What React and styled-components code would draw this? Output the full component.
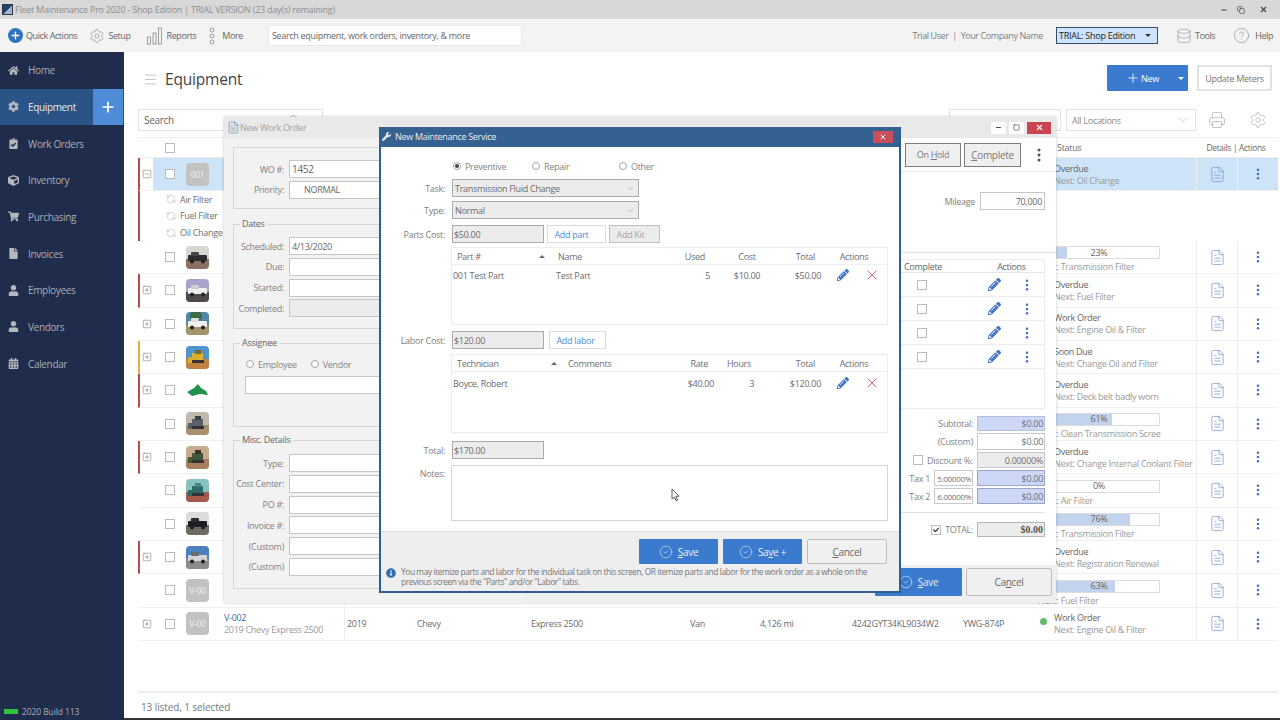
import React from "react";
import styled, { createGlobalStyle } from "styled-components";
import {
  Settings, Printer, Database, CircleHelp, RefreshCcw, X, Plus, ChevronDown, FileText,
  CircleCheck, Menu, SquarePlus, SquareMinus, Minus, Square, Copy, Search,
} from "lucide-react";
import {
  FaHome, FaCog, FaCube, FaShoppingCart, FaUser, FaCalendarAlt, FaFile, FaClipboardCheck,
  FaPencilAlt, FaInfoCircle, FaWrench, FaCheck,
} from "react-icons/fa";

const GlobalStyle = createGlobalStyle`
  html, body { margin: 0; padding: 0; background: #fff; }
  body {
    width: 1280px;
    height: 720px;
    overflow: hidden;
    font-family: "Open Sans", "Liberation Sans", sans-serif;
    font-size: 9px;
    letter-spacing: -0.3px;
    color: #6b6b6b;
  }
  * { box-sizing: border-box; }
`;

const Page = styled.div`
  position: relative;
  width: 1280px;
  height: 720px;
  display: flex;
  flex-direction: column;
  overflow: hidden;
`;

/* ---------- top bars ---------- */

const TitleBar = styled.div`
  height: 19px;
  flex: none;
  display: flex;
  align-items: center;
  padding: 0 12px 0 2px;
  background: #d8d8d8;
  color: #8f8f8f;
  font-size: 9px;
  letter-spacing: -0.25px;
`;

const AppLogo = styled.div`
  width: 11px;
  height: 11px;
  margin-right: 2px;
  background: linear-gradient(135deg, #24406e 50%, #9fb6d6 50%);
  border: 1px solid #334;
`;

const WinControls = styled.div`
  margin-left: auto;
  display: grid;
  grid-template-columns: 17px 22px 9px;
  align-items: center;
  color: #444;
`;

const Toolbar = styled.div`
  height: 33px;
  flex: none;
  display: flex;
  align-items: center;
  padding: 0 7px 0 8px;
  background: #f3f3f3;
  color: #666;
  letter-spacing: -0.42px;
`;

const ToolItem = styled.div`
  display: flex;
  align-items: center;
  gap: ${p => p.$gap || 3}px;
  margin-left: ${p => p.$ml || 0}px;
  white-space: nowrap;
`;

const QuickIcon = styled.div`
  width: 15px;
  height: 15px;
  border-radius: 50%;
  background: #2f74c0;
  color: #fff;
  display: flex;
  align-items: center;
  justify-content: center;
`;

const GlobalSearch = styled.div`
  width: 254px;
  height: 21px;
  margin-left: 25px;
  padding-left: 3px;
  display: flex;
  align-items: center;
  background: #fff;
  border: 1px solid #e8e8e8;
  border-radius: 2px;
  color: #666;
  letter-spacing: -0.3px;
`;

const UserInfo = styled.div`
  margin-left: auto;
  color: #808080;
  white-space: nowrap;
`;

const EditionSelect = styled.div`
  width: 102px;
  height: 17px;
  margin-left: 13px;
  padding: 0 6px 0 2px;
  display: flex;
  align-items: center;
  justify-content: space-between;
  background: #cfe3fb;
  border: 1px solid #33506f;
  color: #222;
  letter-spacing: -0.25px;
`;

const Caret = styled.span`
  width: 0;
  height: 0;
  border-left: 3px solid transparent;
  border-right: 3px solid transparent;
  border-top: 3px solid ${p => p.$color || "#333"};
`;

const UpCaret = styled.span`
  width: 0;
  height: 0;
  border-left: 3px solid transparent;
  border-right: 3px solid transparent;
  border-bottom: 3px solid #666;
`;

/* ---------- sidebar ---------- */

const Body = styled.div`
  flex: 1;
  display: flex;
  min-height: 0;
`;

const Sidebar = styled.nav`
  width: 124px;
  flex: none;
  display: flex;
  flex-direction: column;
  background: #1f2c4b;
  color: #a9adb6;
  font-size: 10px;
  letter-spacing: -0.35px;
`;

const NavItem = styled.div`
  height: 36.67px;
  flex: none;
  display: flex;
  align-items: center;
  padding-left: 8px;
  gap: 9px;
  background: ${p => (p.$active ? "#2a5485" : "transparent")};
  color: ${p => (p.$active ? "#e4e8ee" : "#a9adb6")};
`;

const NavIcon = styled.span`
  width: 11px;
  display: flex;
  justify-content: center;
  color: #b4b7bd;
`;

const NavAdd = styled.div`
  margin-left: auto;
  margin-right: 1px;
  width: 30px;
  height: 100%;
  display: flex;
  align-items: center;
  justify-content: center;
  background: #4e8cd8;
  color: #fff;
`;

const BuildLabel = styled.div`
  margin-top: auto;
  height: 18px;
  display: flex;
  align-items: center;
  gap: 4px;
  padding-left: 4px;
  font-size: 8.5px;
  letter-spacing: -0.1px;
  color: #a9adb6;
`;

const Battery = styled.span`
  width: 14px;
  height: 5px;
  background: #2fc23a;
`;

/* ---------- main content ---------- */

const Main = styled.main`
  flex: 1;
  min-width: 0;
  display: flex;
  flex-direction: column;
  padding: 0 2px 0 14px;
  border-bottom: 2px solid #333;
  background: #fff;
`;

const MainHeader = styled.header`
  height: 57px;
  flex: none;
  display: flex;
  align-items: flex-start;
  padding: 13px 6px 0 5px;
`;

const PageTitle = styled.h1`
  margin: 3px 0 0;
  display: flex;
  align-items: center;
  gap: 7px;
  font-size: 15.5px;
  font-weight: 400;
  letter-spacing: -0.2px;
  color: #444;
`;

const NewButton = styled.div`
  margin-left: auto;
  width: 81px;
  height: 26px;
  display: flex;
  align-items: center;
  justify-content: space-between;
  padding: 0 4px 0 19px;
  background: #3b7bcf;
  color: #fff;
  border-radius: 1px;
`;

const NewLabel = styled.span`
  display: flex;
  align-items: center;
  gap: 1px;
`;

const OutlineButton = styled.div`
  width: 75px;
  height: 26px;
  margin-left: 9px;
  display: flex;
  align-items: center;
  justify-content: center;
  border: 2px solid #e2e2e2;
  border-radius: 1px;
  color: #777;
`;

const FilterBar = styled.div`
  height: 22px;
  flex: none;
  margin-bottom: 6px;
  display: flex;
  align-items: stretch;
`;

const SearchBox = styled.div`
  width: 185px;
  display: flex;
  align-items: center;
  justify-content: space-between;
  padding: 0 22px 0 5px;
  border: 1px solid #e4e4e4;
  color: #666;
  font-size: 10px;
`;

const BlankFilter = styled.div`
  width: 112px;
  margin-left: auto;
  border: 1px solid #e4e4e4;
`;

const LocationFilter = styled.div`
  width: 130px;
  margin-left: 5px;
  padding: 0 5px;
  display: flex;
  align-items: center;
  justify-content: space-between;
  border: 1px solid #e4e4e4;
  color: #888;
`;

const FilterIcon = styled.div`
  width: 41px;
  display: flex;
  align-items: center;
  justify-content: center;
  color: #a8a8a8;
`;

const Table = styled.div`
  flex: 1;
  min-height: 0;
  border-bottom: 2px solid #eeeeee;
  border-top: 1px solid #eeeeee;
`;

const COLUMNS = "13px 33px 38px 121px 70px 114px 159px 70px 92px 111px 77px 159px 41px 39px";

const TableHead = styled.div`
  height: 20px;
  display: grid;
  grid-template-columns: ${COLUMNS};
  align-items: center;
  border-left: 2px solid transparent;
  border-bottom: 1px solid #eeeeee;
  color: #666;
`;

const Row = styled.div`
  height: ${p => (p.$selected ? 33 : 33.33)}px;
  display: grid;
  grid-template-columns: ${COLUMNS};
  align-items: center;
  border-left: 2px solid ${p => p.$stripe || "transparent"};
  border-bottom: 1px solid #f0f0f0;
  background: ${p => (p.$selected ? "#cde3f7" : "#fff")};
`;

const ExpandCell = styled.div`
  height: 100%;
  display: flex;
  align-items: center;
  justify-content: center;
  background: #fff;
  color: #666;
`;

const CheckCell = styled.div`
  height: 100%;
  display: flex;
  align-items: center;
  justify-content: center;
`;

const CheckBox = styled.span`
  width: 10px;
  height: 10px;
  flex: none;
  display: inline-flex;
  align-items: center;
  justify-content: center;
  background: #fff;
  border: 1px solid #b9b9b9;
  color: #333;
`;

const ThumbCell = styled.div`
  display: flex;
  align-items: center;
`;

const ThumbArt = styled.svg`
  filter: blur(0.45px);
`;

const PlaceholderThumb = styled.div`
  width: 23px;
  height: 23px;
  overflow: hidden;
  display: flex;
  align-items: center;
  justify-content: center;
  background: #c2c2c2;
  border-radius: 4px;
  color: #eee;
  font-size: 8.5px;
  white-space: nowrap;
`;

const NameCell = styled.div`
  height: 100%;
  display: flex;
  flex-direction: column;
  justify-content: center;
  padding-top: 1px;
  line-height: 12px;
  border-right: 1px solid #eeeeee;
`;

const LinkText = styled.span`
  color: #3a6ca8;
`;

const SubText = styled.span`
  color: #9a9a9a;
  white-space: nowrap;
`;

const Cell = styled.div`
  padding-left: ${p => p.$pl || 2}px;
  color: #6b6b6b;
  white-space: nowrap;
`;

const StatusCell = styled.div`
  height: 100%;
  display: flex;
  flex-direction: column;
  justify-content: ${p => (p.$bar ? "flex-end" : "center")};
  padding-left: ${p => (p.$bar ? 0 : 16)}px;
  padding-top: 1px;
  line-height: 12px;
  position: relative;
  color: #666;
  border-right: 1px solid #eeeeee;
`;

const StatusDot = styled.span`
  position: absolute;
  left: 2px;
  top: 10px;
  width: 7px;
  height: 7px;
  border-radius: 50%;
  background: #63ba6e;
`;

const ProgressBar = styled.div`
  width: 122px;
  height: 13px;
  margin-bottom: 2px;
  position: relative;
  display: flex;
  align-items: center;
  justify-content: center;
  border: 1px solid #dcdcdc;
  color: #666;
  background: #fff;
`;

const ProgressFill = styled.div`
  position: absolute;
  left: 0;
  top: 0;
  bottom: 0;
  background: #c2d3ee;
`;

const ProgressText = styled.span`
  position: relative;
`;

const IconCell = styled.div`
  height: 100%;
  display: flex;
  align-items: center;
  justify-content: center;
  color: ${p => p.$color || "#7f9ad2"};
  border-right: ${p => (p.$divided ? "1px solid #eeeeee" : "none")};
`;

const HeadRightLabel = styled.div`
  grid-column: 13 / 15;
  text-align: center;
  padding-right: 2px;
  font-size: 8.4px;
  white-space: nowrap;
  color: #666;
`;

const SubRows = styled.div`
  height: 50px;
  border-left: 2px solid #b84a4a;
  padding-left: 26px;
  display: flex;
  flex-direction: column;
`;

const SubRow = styled.div`
  height: 16.67px;
  display: flex;
  align-items: center;
  gap: 4px;
  color: #6f6f6f;
`;

const ListFooter = styled.footer`
  height: 25px;
  flex: none;
  display: flex;
  align-items: center;
  padding: 2px 0 0 3px;
  color: #777;
  font-size: 10px;
  letter-spacing: -0.1px;
`;

/* ---------- work order window ---------- */

const WorkOrderWindow = styled.section`
  position: absolute;
  left: 224px;
  top: 117px;
  width: 832px;
  height: 486px;
  display: flex;
  flex-direction: column;
  background: #f2f2f2;
  box-shadow: 0 0 3px rgba(0, 0, 0, 0.22);
`;

const WindowTitle = styled.div`
  height: 21px;
  flex: none;
  display: flex;
  align-items: center;
  padding: 0 5px 0 3px;
  background: #e9e9e9;
  color: #a2a2a2;
`;

const WinButtons = styled.div`
  margin-left: auto;
  display: flex;
  align-items: center;
  gap: 3px;
`;

const WinButton = styled.div`
  width: ${p => (p.$close ? 24 : 15)}px;
  height: 12px;
  display: flex;
  align-items: center;
  justify-content: center;
  background: ${p => (p.$close ? "#c9444e" : "#fff")};
  color: ${p => (p.$close ? "#fff" : "#333")};
`;

const WindowBody = styled.div`
  flex: 1;
  display: flex;
  min-height: 0;
`;

const FormPanel = styled.div`
  width: 300px;
  flex: none;
  padding: 9px 9px 0;
  display: flex;
  flex-direction: column;
`;

const Group = styled.fieldset`
  margin: ${p => p.$mt || 0}px 0 0;
  padding: ${p => p.$pt || 0}px 0 0 0;
  height: ${p => p.$h}px;
  flex: none;
  border: 1px solid #d6d6d6;
  min-width: 0;
`;

const GroupLegend = styled.legend`
  margin-left: 6px;
  padding: 0 2px;
  line-height: 12px;
  color: #666;
`;

const FieldRow = styled.div`
  display: grid;
  grid-template-columns: 50px 1fr;
  column-gap: 5px;
  height: 18px;
  margin-bottom: 2.8px;
  align-items: center;
`;

const FieldLabel = styled.label`
  text-align: right;
  white-space: nowrap;
  color: #828282;
`;

const TextBox = styled.div`
  height: 18px;
  display: flex;
  align-items: center;
  background: ${p => (p.$disabled ? "#ececec" : "#fff")};
  border: 1px solid #c6c6c6;
  color: #666;
  font-size: ${p => p.$size || 9}px;
  padding: 0 2px 0 ${p => p.$pl || 2}px;
  white-space: nowrap;
`;

const RadioRow = styled.div`
  height: 16px;
  display: flex;
  align-items: center;
  gap: ${p => p.$gap ?? 14}px;
  padding-left: ${p => p.$pl || 0}px;
`;

const RadioOption = styled.label`
  display: flex;
  align-items: center;
  gap: 4px;
  color: #858585;
  flex: none;
  width: ${p => (p.$w ? `${p.$w}px` : "auto")};
`;

const RadioDot = styled.span`
  width: 8px;
  height: 8px;
  border-radius: 50%;
  border: 1px solid #a5a5a5;
  background: #fff;
  display: inline-flex;
  align-items: center;
  justify-content: center;
  &::after {
    content: "";
    width: 4px;
    height: 4px;
    border-radius: 50%;
    background: ${p => (p.$on ? "#444" : "transparent")};
  }
`;

const AssigneeBox = styled(TextBox)`
  margin: 4px 0 0 11px;
`;

const DetailPanel = styled.div`
  flex: 1;
  min-width: 0;
  display: flex;
  flex-direction: column;
  background: #fff;
`;

const ActionBar = styled.div`
  height: 34px;
  flex: none;
  display: flex;
  align-items: center;
  justify-content: flex-end;
  gap: 3px;
  border-bottom: 1px solid #e6e6e6;
`;

const GreyButton = styled.div`
  width: ${p => p.$w}px;
  height: 24px;
  display: flex;
  align-items: center;
  justify-content: center;
  background: #efefef;
  border: 1px solid #7c7c7c;
  color: #7a7a7a;
  font-size: ${p => p.$size || 9}px;
`;

const KebabSlot = styled.div`
  width: 35px;
  margin-left: -3px;
  display: flex;
  justify-content: center;
  color: #555;
`;

const MileageRow = styled.div`
  margin-top: 20px;
  padding-right: 11px;
  display: flex;
  align-items: center;
  justify-content: flex-end;
  gap: 5px;
  color: #828282;
`;

const MileageBox = styled(TextBox)`
  width: 65px;
  justify-content: flex-end;
`;

const Divider = styled.div`
  margin-top: ${p => p.$mt}px;
  height: 1px;
  flex: none;
  background: #e2e2e2;
`;

const TaskTable = styled.div`
  margin: 6px 11px 0 0;
  height: 150px;
  flex: none;
  border: 1px solid #ececec;
`;

const TaskHead = styled.div`
  height: 13px;
  display: grid;
  grid-template-columns: 1fr 35px 40px 65px;
  align-items: center;
  border-bottom: 1px solid #e6e6e6;
  color: #666;
`;

const TaskHeadLabel = styled.span`
  grid-column: ${p => p.$col};
  text-align: ${p => p.$align || "left"};
  white-space: nowrap;
`;

const TaskRow = styled.div`
  height: 24px;
  display: grid;
  grid-template-columns: 1fr 35px 40px 30px 35px;
  align-items: center;
  justify-items: center;
  border-bottom: 1px solid #ececec;
`;

const PencilIcon = styled(FaPencilAlt)`
  color: #3d72c6;
`;

const KebabIcon = styled.svg`
  color: ${p => p.$color || "#4f6fb8"};
`;

const TotalsStack = styled.div`
  margin-top: 7px;
  padding-right: 11px;
  display: flex;
  flex-direction: column;
  align-items: stretch;
  gap: 2px;
`;

const TotalsRow = styled.div`
  height: ${p => p.$h || 16}px;
  display: flex;
  align-items: center;
  justify-content: flex-end;
  gap: 4px;
  margin-top: ${p => p.$mt || 0}px;
  color: #828282;
`;

const TotalsBox = styled.div`
  width: ${p => p.$w || 68}px;
  height: 100%;
  padding: 0 1px;
  display: flex;
  align-items: center;
  justify-content: flex-end;
  background: ${p => p.$bg || "#fff"};
  border: 1px solid ${p => p.$line || "#c8c8c8"};
  color: #6f6f6f;
  font-size: ${p => p.$size || 9}px;
`;

const GrandTotal = styled.strong`
  font-family: "Liberation Serif", serif;
  font-size: 10px;
  letter-spacing: 0;
  color: #555;
`;

const TaxLabel = styled.span`
  color: #828282;
`;

const TaxRate = styled(TotalsBox)`
  width: 39px;
  font-size: 8px;
`;

const WindowFooter = styled.div`
  margin-top: auto;
  height: 38px;
  flex: none;
  display: flex;
  align-items: center;
  justify-content: flex-end;
  gap: 4px;
  padding: 0 4px 5px 0;
  background: #efefef;
`;

const PrimaryButton = styled.div`
  width: ${p => p.$w}px;
  height: ${p => p.$h || 25}px;
  display: flex;
  align-items: center;
  justify-content: center;
  gap: 5px;
  background: #3b7bcf;
  color: #e8f0fb;
  font-size: 10px;
  border-radius: 1px;
`;

const CancelButton = styled.div`
  width: ${p => p.$w}px;
  height: ${p => p.$h || 25}px;
  display: flex;
  align-items: center;
  justify-content: center;
  background: #f0f0f0;
  border: 1px solid #bdbdbd;
  border-radius: 2px;
  color: #666;
  font-size: 10px;
`;

/* ---------- maintenance dialog ---------- */

const ServiceDialog = styled.section`
  position: absolute;
  left: 379px;
  top: 127px;
  width: 522px;
  height: 466px;
  display: flex;
  flex-direction: column;
  background: #fff;
  border: 2px solid #2f5f91;
  border-top: none;
`;

const DialogTitle = styled.div`
  height: 20px;
  flex: none;
  display: flex;
  align-items: center;
  gap: 4px;
  padding: 0 6px 1px 1px;
  background: #34618f;
  color: #e8edf3;
`;

const DialogClose = styled.div`
  margin-left: auto;
  width: 20px;
  height: 12px;
  display: flex;
  align-items: center;
  justify-content: center;
  background: #c9505a;
  color: #fff;
`;

const DialogRow = styled.div`
  margin-top: ${p => p.$mt || 0}px;
  height: ${p => p.$h || 18}px;
  flex: none;
  display: grid;
  grid-template-columns: 64px 1fr;
  column-gap: ${p => p.$gap ?? 7}px;
  padding-right: 11px;
  align-items: ${p => (p.$top ? "start" : "center")};
`;

const DialogLabel = styled.label`
  text-align: right;
  color: #7e7e7e;
  white-space: nowrap;
  padding-top: ${p => p.$pt || 0}px;
`;

const FieldGroup = styled.div`
  display: flex;
  gap: 3px;
  align-items: stretch;
  height: 100%;
`;

const SelectBox = styled.div`
  width: 187px;
  height: 18px;
  padding: 0 3px 0 2px;
  display: flex;
  align-items: center;
  justify-content: space-between;
  background: #ececec;
  border: 1px solid #ababab;
  color: #6d6d6d;
`;

const ReadonlyBox = styled.div`
  width: 92px;
  padding-left: 1px;
  display: flex;
  align-items: center;
  background: #ececec;
  border: 1px solid #ababab;
  color: #6d6d6d;
`;

const LinkButton = styled.div`
  width: ${p => p.$w}px;
  margin-left: ${p => p.$ml || 0}px;
  padding-right: ${p => p.$pr || 0}px;
  display: flex;
  align-items: center;
  justify-content: center;
  background: #fff;
  border: 1px solid #dcdcdc;
  color: #4a90d9;
`;

const DisabledButton = styled.div`
  width: ${p => p.$w}px;
  padding-right: 8px;
  display: flex;
  align-items: center;
  justify-content: center;
  background: #ececec;
  border: 1px solid #c0c0c0;
  color: #a5a5a5;
`;

const ItemTable = styled.div`
  margin: ${p => p.$mt}px 11px 0 70px;
  height: ${p => p.$h}px;
  flex: none;
  border: 1px solid #ececec;
`;

const ItemHead = styled.div`
  height: 17px;
  display: grid;
  grid-template-columns: ${p => p.$cols};
  align-items: center;
  border-bottom: 1px solid #eeeeee;
  color: #6f6f6f;
`;

const ItemRow = styled.div`
  height: ${p => p.$h || 22}px;
  display: grid;
  grid-template-columns: ${p => p.$cols};
  align-items: center;
  color: #6b6b6b;
`;

const HeadCell = styled.div`
  display: flex;
  align-items: center;
  justify-content: ${p => p.$justify || "flex-start"};
  padding: 0 ${p => p.$pr || 0}px 0 ${p => p.$pl || 0}px;
  white-space: nowrap;
`;

const ItemCell = styled.div`
  text-align: ${p => p.$align || "left"};
  padding: 0 ${p => p.$pr || 0}px 0 ${p => p.$pl || 0}px;
  white-space: nowrap;
`;

const ItemActions = styled.div`
  display: grid;
  grid-template-columns: ${p => p.$cols};
  justify-items: center;
  align-items: center;
`;

const NotesBox = styled.div`
  background: #fff;
  border: 1px solid #d4d4d4;
  height: 100%;
`;

const DialogFooter = styled.div`
  margin-top: auto;
  height: 60px;
  flex: none;
  padding-top: 7px;
  background: #eeeeee;
  border-top: 1px solid #dcdcdc;
`;

const DialogButtons = styled.div`
  display: flex;
  justify-content: flex-end;
  gap: 5px;
  padding-right: 12px;
`;

const InfoLine = styled.div`
  margin-top: 3px;
  display: flex;
  align-items: flex-start;
  gap: 5px;
  padding-left: 5px;
  font-size: 8.4px;
  letter-spacing: -0.42px;
  line-height: 10px;
  color: #777;
`;

const InfoIcon = styled(FaInfoCircle)`
  color: #2f6fb5;
  flex: none;
  margin-top: 1px;
`;

const PointerMark = styled.svg`
  position: absolute;
  left: 671px;
  top: 488px;
`;

const Kebab = ({ size = 12, color }) => (
  <KebabIcon $color={color} width="6" height={size} viewBox="0 0 6 14">
    <circle cx="3" cy="2" r="1.5" fill="currentColor" />
    <circle cx="3" cy="7" r="1.5" fill="currentColor" />
    <circle cx="3" cy="12" r="1.5" fill="currentColor" />
  </KebabIcon>
);

const ReportsIcon = () => (
  <svg width="16" height="18" viewBox="0 0 16 18" fill="none" stroke="#888" strokeWidth="0.8">
    <rect x="0.5" y="10" width="3" height="7" />
    <rect x="6" y="6" width="3" height="11" />
    <rect x="11.5" y="1" width="3" height="16" />
  </svg>
);

const MoreIcon = () => (
  <svg width="6" height="18" viewBox="0 0 6 18" fill="none" stroke="#888" strokeWidth="0.8">
    <circle cx="3" cy="3" r="2" />
    <circle cx="3" cy="9" r="2" />
    <circle cx="3" cy="15" r="2" />
  </svg>
);

// small hand drawn stand-ins for the vehicle photos
const Thumb = ({ sky, ground, body, cab, shape = "truck", tree }) => (
  <ThumbArt width="23" height="23" viewBox="0 0 23 23">
    <defs>
      <clipPath id="thumb-clip"><rect width="23" height="23" rx="4" /></clipPath>
    </defs>
    <g clipPath="url(#thumb-clip)">
      <rect width="23" height="23" fill={sky} />
      {tree && <circle cx="10" cy="4" r="6" fill={tree} />}
      <rect y="13" width="23" height="10" fill={ground} />
      {shape === "truck" && (
        <>
          <rect x="2" y="9" width="19" height="6" rx="1" fill={body} />
          <rect x="5" y="6" width="8" height="4" rx="1" fill={cab} />
          <circle cx="6" cy="15.5" r="2" fill="#222" />
          <circle cx="17" cy="15.5" r="2" fill="#222" />
        </>
      )}
      {shape === "dozer" && (
        <>
          <rect x="6" y="7" width="11" height="7" fill={body} />
          <rect x="9" y="4" width="6" height="4" fill={cab} />
          <rect x="2" y="11" width="4" height="6" fill={body} />
          <rect x="6" y="14" width="12" height="3" fill="#333" />
        </>
      )}
      {shape === "mower" && (
        <path d="M1 13 L8 9 L12 5 L15 9 L20 12 L22 16 L14 15 L6 17 Z" fill={body} />
      )}
    </g>
  </ThumbArt>
);

const VEHICLE_ROWS = [
  { thumb: { sky: "#d9d6d2", ground: "#8b6f60", body: "#2c2c30", cab: "#45454b" }, status: { label: "23%", pct: 23, next: "Transmission Filter" } },
  { stripe: "#b84a4a", expand: true, thumb: { sky: "#a9a3cc", ground: "#4f4a48", body: "#eeeeee", cab: "#cfcfcf" }, status: { title: "Overdue", next: "Fuel Filter" } },
  { expand: true, thumb: { sky: "#4f86a8", ground: "#a39468", body: "#f2f2f2", cab: "#dddddd", tree: "#3d6b45" }, status: { title: "Work Order", next: "Engine Oil & Filter" } },
  { stripe: "#e0b040", expand: true, thumb: { sky: "#4f94cc", ground: "#c0803f", body: "#d8b030", cab: "#7d6a2a", shape: "dozer" }, status: { title: "Soon Due", next: "Change Oil and Filter" } },
  { stripe: "#b84a4a", expand: true, thumb: { sky: "#ffffff", ground: "#ffffff", body: "#22914a", cab: "#22914a", shape: "mower" }, status: { title: "Overdue", next: "Deck belt badly worn" } },
  { thumb: { sky: "#c2b9ad", ground: "#a58f6d", body: "#5a5f69", cab: "#3d4048", shape: "dozer" }, status: { label: "61%", pct: 61, next: "Clean Transmission Scree" } },
  { stripe: "#b84a4a", expand: true, thumb: { sky: "#c9ac8e", ground: "#a77f60", body: "#45563a", cab: "#2c3528", shape: "dozer" }, status: { title: "Overdue", next: "Change Internal Coolant Filter" } },
  { thumb: { sky: "#8ac0c0", ground: "#a4594c", body: "#2f6b66", cab: "#3f8a80", shape: "dozer" }, status: { label: "0%", pct: 0, next: "Air Filter" } },
  { thumb: { sky: "#dcdcdc", ground: "#6f6a62", body: "#1c1c22", cab: "#2b2b33" }, status: { label: "76%", pct: 76, next: "Transmission Filter" } },
  { stripe: "#b84a4a", expand: true, thumb: { sky: "#4a80bc", ground: "#8c8c8c", body: "#d5d5d5", cab: "#6c6c6c" }, status: { title: "Overdue", next: "Registration Renewal" } },
  { placeholder: true, status: { label: "63%", pct: 63, next: "Fuel Filter" } },
  {
    placeholder: true,
    expand: true,
    name: "V-002",
    desc: "2019 Chevy Express 2500",
    cells: ["2019", "Chevy", "Express 2500", "Van", "4,126 mi", "4242GYT34KL9034W2", "YWG-874P"],
    status: { title: "Work Order", next: "Engine Oil & Filter", dot: true },
  },
];

const StatusInfo = ({ status }) => {
  if (status.label) {
    return (
      <StatusCell $bar>
        <ProgressBar>
          <ProgressFill style={{ width: `${status.pct}%` }} />
          <ProgressText>{status.label}</ProgressText>
        </ProgressBar>
        <SubText>Next: {status.next}</SubText>
      </StatusCell>
    );
  }
  return (
    <StatusCell>
      {status.dot && <StatusDot />}
      <span>{status.title}</span>
      <SubText>Next: {status.next}</SubText>
    </StatusCell>
  );
};

const VehicleRow = ({ row }) => (
  <Row $stripe={row.stripe}>
    <ExpandCell>{row.expand && <SquarePlus size={10} strokeWidth={1.2} />}</ExpandCell>
    <CheckCell><CheckBox /></CheckCell>
    <ThumbCell>
      {row.placeholder ? <PlaceholderThumb>V-00</PlaceholderThumb> : <Thumb {...row.thumb} />}
    </ThumbCell>
    <NameCell>
      {row.name && <LinkText>{row.name}</LinkText>}
      {row.desc && <SubText>{row.desc}</SubText>}
    </NameCell>
    {(row.cells || ["", "", "", "", "", "", ""]).map((c, i) => <Cell key={i}>{c}</Cell>)}
    <StatusInfo status={row.status} />
    <IconCell $divided><FileText size={17} strokeWidth={1.1} /></IconCell>
    <IconCell $color="#4f6fb8"><Kebab /></IconCell>
  </Row>
);

const NAV_ITEMS = [
  { label: "Home", icon: <FaHome size={11} /> },
  { label: "Equipment", icon: <FaCog size={11} />, active: true },
  { label: "Work Orders", icon: <FaClipboardCheck size={11} /> },
  { label: "Inventory", icon: <FaCube size={11} /> },
  { label: "Purchasing", icon: <FaShoppingCart size={11} /> },
  { label: "Invoices", icon: <FaFile size={11} /> },
  { label: "Employees", icon: <FaUser size={11} /> },
  { label: "Vendors", icon: <FaUser size={11} /> },
  { label: "Calendar", icon: <FaCalendarAlt size={11} /> },
];

const PARTS_COLS = "104px 95px 60px 72px 38px 1fr";
const LABOR_COLS = "114px 90px 60px 40px 65px 1fr";
const ACTION_COLS = "44px 14px";

const RowActions = () => (
  <ItemActions $cols={ACTION_COLS}>
    <PencilIcon size={12} />
    <X size={16} color="#d9525a" strokeWidth={1.3} />
  </ItemActions>
);

export default function App() {
  return (
    <Page>
      <GlobalStyle />
      <TitleBar>
        <AppLogo />
        Fleet Maintenance Pro 2020 -  Shop Edition | TRIAL VERSION (23 day(s) remaining)
        <WinControls>
          <Minus size={8} strokeWidth={3} />
          <Copy size={8} strokeWidth={2} />
          <X size={9} strokeWidth={3} />
        </WinControls>
      </TitleBar>

      <Toolbar>
        <ToolItem>
          <QuickIcon><Plus size={11} strokeWidth={3} /></QuickIcon>
          Quick Actions
        </ToolItem>
        <ToolItem $ml={12}>
          <Settings size={16} color="#888" strokeWidth={0.9} />
          Setup
        </ToolItem>
        <ToolItem $ml={16} $gap={4}>
          <ReportsIcon />
          Reports
        </ToolItem>
        <ToolItem $ml={13} $gap={7}>
          <MoreIcon />
          More
        </ToolItem>
        <GlobalSearch>Search equipment, work orders, inventory, &amp; more</GlobalSearch>
        <UserInfo>Trial User &nbsp;|&nbsp; Your Company Name</UserInfo>
        <EditionSelect>TRIAL: Shop Edition <Caret /></EditionSelect>
        <ToolItem $ml={18}>
          <Database size={16} color="#7f8c9c" strokeWidth={0.9} />
          Tools
        </ToolItem>
        <ToolItem $ml={18} $gap={5}>
          <CircleHelp size={17} color="#7f8c9c" strokeWidth={0.9} />
          Help
        </ToolItem>
      </Toolbar>

      <Body>
        <Sidebar>
          {NAV_ITEMS.map(item => (
            <NavItem key={item.label} $active={item.active}>
              <NavIcon>{item.icon}</NavIcon>
              {item.label}
              {item.active && <NavAdd><Plus size={16} strokeWidth={2.6} /></NavAdd>}
            </NavItem>
          ))}
          <BuildLabel><Battery />2020 Build 113</BuildLabel>
        </Sidebar>

        <Main>
          <MainHeader>
            <PageTitle>
              <Menu size={15} color="#bbb" strokeWidth={1.4} />
              Equipment
            </PageTitle>
            <NewButton>
              <NewLabel><Plus size={14} strokeWidth={1.4} />New</NewLabel>
              <Caret $color="#fff" />
            </NewButton>
            <OutlineButton>Update Meters</OutlineButton>
          </MainHeader>

          <FilterBar>
            <SearchBox>Search <Search size={12} color="#999" strokeWidth={1.2} /></SearchBox>
            <BlankFilter />
            <LocationFilter>
              All Locations
              <ChevronDown size={14} color="#aaa" strokeWidth={1} />
            </LocationFilter>
            <FilterIcon><Printer size={18} strokeWidth={0.9} /></FilterIcon>
            <FilterIcon><Settings size={18} strokeWidth={0.9} /></FilterIcon>
          </FilterBar>

          <Table>
            <TableHead>
              <span />
              <CheckCell><CheckBox /></CheckCell>
              <span /><span /><span /><span /><span /><span /><span /><span /><span />
              <Cell $pl={19}>Status</Cell>
              <HeadRightLabel>Details | Actions</HeadRightLabel>
            </TableHead>

            <Row $selected $stripe="#b84a4a">
              <ExpandCell><SquareMinus size={10} strokeWidth={1.2} /></ExpandCell>
              <CheckCell><CheckBox /></CheckCell>
              <ThumbCell><PlaceholderThumb>001</PlaceholderThumb></ThumbCell>
              <NameCell />
              <Cell /><Cell /><Cell /><Cell /><Cell /><Cell /><Cell />
              <StatusCell>
                <span>Overdue</span>
                <SubText>Next: Oil Change</SubText>
              </StatusCell>
              <IconCell $divided><FileText size={17} strokeWidth={1.1} /></IconCell>
              <IconCell $color="#4f6fb8"><Kebab /></IconCell>
            </Row>

            <SubRows>
              {["Air Filter", "Fuel Filter", "Oil Change"].map(name => (
                <SubRow key={name}>
                  <RefreshCcw size={10} color="#999" strokeWidth={1} />
                  {name}
                </SubRow>
              ))}
            </SubRows>

            {VEHICLE_ROWS.map((row, i) => <VehicleRow key={i} row={row} />)}
          </Table>

          <ListFooter>13 listed, 1 selected</ListFooter>
        </Main>
      </Body>

      <WorkOrderWindow>
        <WindowTitle>
          <FileText size={13} color="#6f93bd" strokeWidth={1.4} />
          New Work Order
          <WinButtons>
            <WinButton><Minus size={7} strokeWidth={3} /></WinButton>
            <WinButton><Square size={7} strokeWidth={2} /></WinButton>
            <WinButton $close><X size={9} strokeWidth={3} /></WinButton>
          </WinButtons>
        </WindowTitle>

        <WindowBody>
          <FormPanel>
            <Group $h={62} $pt={12}>
              <FieldRow>
                <FieldLabel>WO #:</FieldLabel>
                <TextBox $size={10}>1452</TextBox>
              </FieldRow>
              <FieldRow>
                <FieldLabel>Priority:</FieldLabel>
                <TextBox $pl={14}>NORMAL</TextBox>
              </FieldRow>
            </Group>

            <Group $h={111} $mt={9} $pt={7}>
              <GroupLegend>Dates</GroupLegend>
              <FieldRow>
                <FieldLabel>Scheduled:</FieldLabel>
                <TextBox>4/13/2020</TextBox>
              </FieldRow>
              <FieldRow>
                <FieldLabel>Due:</FieldLabel>
                <TextBox />
              </FieldRow>
              <FieldRow>
                <FieldLabel>Started:</FieldLabel>
                <TextBox />
              </FieldRow>
              <FieldRow>
                <FieldLabel>Completed:</FieldLabel>
                <TextBox $disabled />
              </FieldRow>
            </Group>

            <Group $h={90} $mt={8} $pt={7}>
              <GroupLegend>Assignee</GroupLegend>
              <RadioRow $pl={12}>
                <RadioOption><RadioDot />Employee</RadioOption>
                <RadioOption><RadioDot />Vendor</RadioOption>
              </RadioRow>
              <AssigneeBox />
            </Group>

            <Group $h={155} $mt={7} $pt={8}>
              <GroupLegend>Misc. Details</GroupLegend>
              {["Type:", "Cost Center:", "PO #:", "Invoice #:", "(Custom)", "(Custom)"].map((label, i) => (
                <FieldRow key={i}>
                  <FieldLabel>{label}</FieldLabel>
                  <TextBox />
                </FieldRow>
              ))}
            </Group>
          </FormPanel>

          <DetailPanel>
            <ActionBar>
              <GreyButton $w={56}><span>On <u>H</u>old</span></GreyButton>
              <GreyButton $w={57} $size={10}><span><u>C</u>omplete</span></GreyButton>
              <KebabSlot><Kebab size={14} color="#555" /></KebabSlot>
            </ActionBar>

            <MileageRow>
              Mileage
              <MileageBox>70,000</MileageBox>
            </MileageRow>

            <Divider $mt={42} />

            <TaskTable>
              <TaskHead>
                <TaskHeadLabel $col={2}>Complete</TaskHeadLabel>
                <TaskHeadLabel $col={4} $align="center">Actions</TaskHeadLabel>
              </TaskHead>
              {[0, 1, 2, 3].map(i => (
                <TaskRow key={i}>
                  <span />
                  <CheckBox />
                  <span />
                  <PencilIcon size={13} />
                  <Kebab />
                </TaskRow>
              ))}
            </TaskTable>

            <TotalsStack>
              <TotalsRow $h={15}>
                <TaxLabel>Subtotal:</TaxLabel>
                <TotalsBox $bg="#ccd8f6" $line="#b5c0dc">$0.00</TotalsBox>
              </TotalsRow>
              <TotalsRow $h={17}>
                <TaxLabel>(Custom)</TaxLabel>
                <TotalsBox>$0.00</TotalsBox>
              </TotalsRow>
              <TotalsRow $h={16}>
                <CheckBox />
                <TaxLabel>Discount %:</TaxLabel>
                <TotalsBox $bg="#ececec">0.00000%</TotalsBox>
              </TotalsRow>
              <TotalsRow $h={16}>
                <TaxLabel>Tax 1</TaxLabel>
                <TaxRate>5.00000%</TaxRate>
                <TotalsBox $bg="#ccd8f6" $line="#9aa6c2">$0.00</TotalsBox>
              </TotalsRow>
              <TotalsRow $h={16}>
                <TaxLabel>Tax 2</TaxLabel>
                <TaxRate>6.00000%</TaxRate>
                <TotalsBox $bg="#ccd8f6" $line="#9aa6c2">$0.00</TotalsBox>
              </TotalsRow>
              <Divider $mt={6} />
              <TotalsRow $h={15} $mt={7}>
                <CheckBox><FaCheck size={6} /></CheckBox>
                <TaxLabel>TOTAL:</TaxLabel>
                <TotalsBox $bg="#ececec" $line="#b5b5b5"><GrandTotal>$0.00</GrandTotal></TotalsBox>
              </TotalsRow>
            </TotalsStack>

            <WindowFooter>
              <PrimaryButton $w={87} $h={28}>
                <CircleCheck size={14} strokeWidth={1} />
                <span><u>S</u>ave</span>
              </PrimaryButton>
              <CancelButton $w={86} $h={28}><span>Ca<u>n</u>cel</span></CancelButton>
            </WindowFooter>
          </DetailPanel>
        </WindowBody>
      </WorkOrderWindow>

      <ServiceDialog>
        <DialogTitle>
          <FaWrench size={9} color="#e8edf3" />
          New Maintenance Service
          <DialogClose><X size={8} strokeWidth={3} /></DialogClose>
        </DialogTitle>

        <DialogRow $mt={11} $h={14}>
          <span />
          <RadioRow $gap={0} $pl={1}>
            <RadioOption $w={79}><RadioDot $on />Preventive</RadioOption>
            <RadioOption $w={87}><RadioDot />Repair</RadioOption>
            <RadioOption><RadioDot />Other</RadioOption>
          </RadioRow>
        </DialogRow>

        <DialogRow $mt={7}>
          <DialogLabel>Task:</DialogLabel>
          <SelectBox>Transmission Fluid Change <ChevronDown size={9} color="#aaa" /></SelectBox>
        </DialogRow>

        <DialogRow $mt={4}>
          <DialogLabel>Type:</DialogLabel>
          <SelectBox>Normal <ChevronDown size={9} color="#aaa" /></SelectBox>
        </DialogRow>

        <DialogRow $mt={6}>
          <DialogLabel>Parts Cost:</DialogLabel>
          <FieldGroup>
            <ReadonlyBox>$50.00</ReadonlyBox>
            <LinkButton $w={59} $pr={10}>Add part</LinkButton>
            <DisabledButton $w={51}>Add Kit</DisabledButton>
          </FieldGroup>
        </DialogRow>

        <ItemTable $mt={4} $h={78}>
          <ItemHead $cols={PARTS_COLS}>
            <HeadCell $pl={5} $justify="space-between" $pr={11}>Part # <UpCaret /></HeadCell>
            <HeadCell $pl={2}>Name</HeadCell>
            <HeadCell $justify="flex-end" $pr={6}>Used</HeadCell>
            <HeadCell $justify="center">Cost</HeadCell>
            <HeadCell $justify="flex-end" $pr={6}>Total</HeadCell>
            <HeadCell $justify="center">Actions</HeadCell>
          </ItemHead>
          <ItemRow $cols={PARTS_COLS} $h={20}>
            <ItemCell $pl={1}>001 Test Part</ItemCell>
            <ItemCell>Test Part</ItemCell>
            <ItemCell $align="right" $pr={1}>5</ItemCell>
            <ItemCell $align="center">$10.00</ItemCell>
            <ItemCell $align="right">$50.00</ItemCell>
            <RowActions />
          </ItemRow>
        </ItemTable>

        <DialogRow $mt={6}>
          <DialogLabel>Labor Cost:</DialogLabel>
          <FieldGroup>
            <ReadonlyBox>$120.00</ReadonlyBox>
            <LinkButton $w={57} $ml={2} $pr={4}>Add labor</LinkButton>
          </FieldGroup>
        </DialogRow>

        <ItemTable $mt={5} $h={79}>
          <ItemHead $cols={LABOR_COLS}>
            <HeadCell $pl={5} $justify="space-between" $pr={9}>Technician <UpCaret /></HeadCell>
            <HeadCell $pl={2}>Comments</HeadCell>
            <HeadCell $justify="flex-end" $pr={8}>Rate</HeadCell>
            <HeadCell $justify="flex-end" $pr={5}>Hours</HeadCell>
            <HeadCell $justify="flex-end" $pr={6}>Total</HeadCell>
            <HeadCell $justify="center">Actions</HeadCell>
          </ItemHead>
          <ItemRow $cols={LABOR_COLS}>
            <ItemCell $pl={1}>Boyce, Robert</ItemCell>
            <ItemCell />
            <ItemCell $align="right" $pr={2}>$40.00</ItemCell>
            <ItemCell $align="right" $pr={2}>3</ItemCell>
            <ItemCell $align="right">$120.00</ItemCell>
            <RowActions />
          </ItemRow>
        </ItemTable>

        <DialogRow $mt={8}>
          <DialogLabel>Total:</DialogLabel>
          <FieldGroup>
            <ReadonlyBox>$170.00</ReadonlyBox>
          </FieldGroup>
        </DialogRow>

        <DialogRow $mt={6} $h={56} $gap={6} $top>
          <DialogLabel $pt={2}>Notes:</DialogLabel>
          <NotesBox />
        </DialogRow>

        <DialogFooter>
          <DialogButtons>
            <PrimaryButton $w={79}>
              <CircleCheck size={14} strokeWidth={1} />
              <span><u>S</u>ave</span>
            </PrimaryButton>
            <PrimaryButton $w={79}>
              <CircleCheck size={14} strokeWidth={1} />
              <span>Sa<u>v</u>e +</span>
            </PrimaryButton>
            <CancelButton $w={80}><span><u>C</u>ancel</span></CancelButton>
          </DialogButtons>
          <InfoLine>
            <InfoIcon size={10} />
            <span>
              You may itemize parts and labor for the individual task on this screen, OR itemize parts and labor for the work order as a whole on the
              <br />
              previous screen via the "Parts" and/or "Labor" tabs.
            </span>
          </InfoLine>
        </DialogFooter>
      </ServiceDialog>

      <PointerMark width="10" height="14" viewBox="0 0 10 14">
        <path d="M1 1 L1 11 L3.4 9 L5 12.6 L6.6 12 L5 8.4 L8 8.2 Z" fill="#fff" stroke="#333" strokeWidth="0.8" />
      </PointerMark>
    </Page>
  );
}
